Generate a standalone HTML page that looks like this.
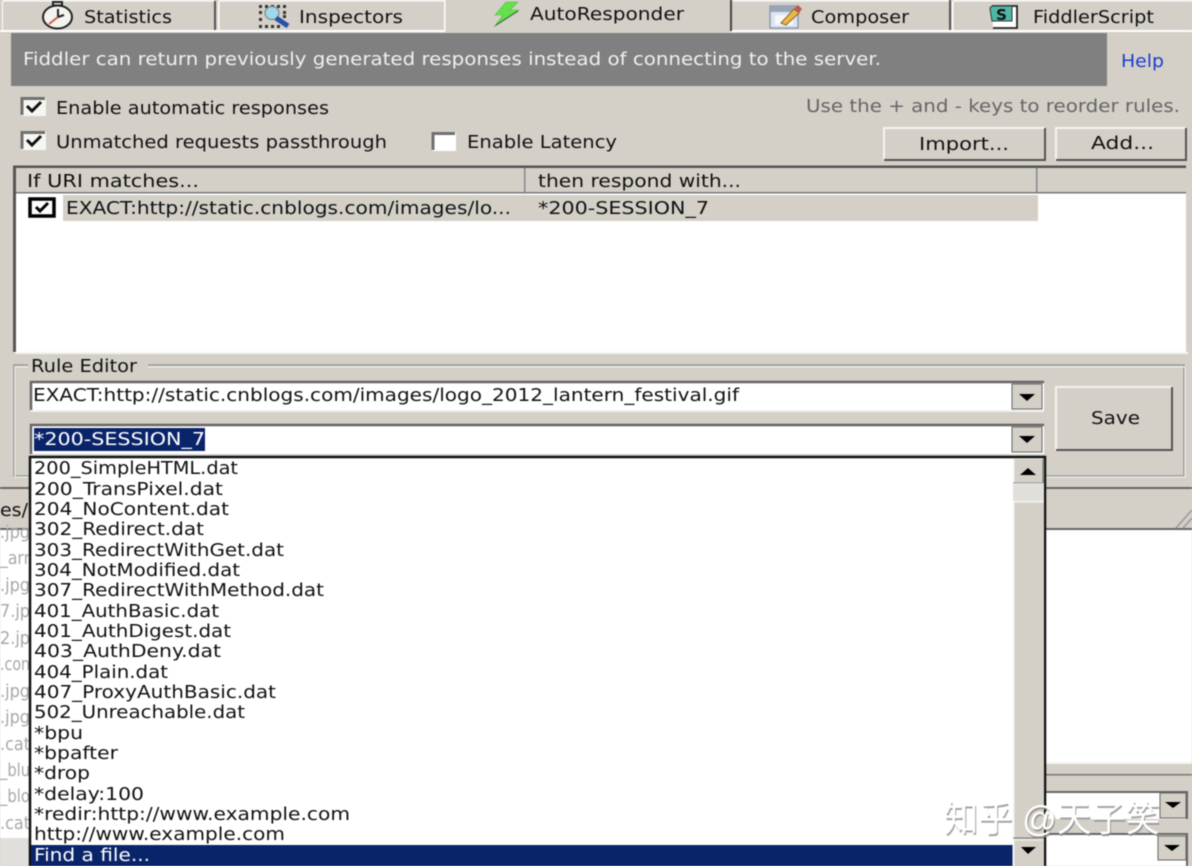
<!DOCTYPE html>
<html><head><meta charset="utf-8"><style>
html,body{margin:0;padding:0;background:#d4d0c8;width:1192px;height:866px;overflow:hidden}
svg{display:block;filter:blur(.5px)}
text{font-family:"DejaVu Sans","Liberation Sans",sans-serif;font-size:18px;fill:#111}
.w{font-family:"Liberation Sans","Noto Sans CJK SC",sans-serif}
</style></head><body>
<svg xmlns="http://www.w3.org/2000/svg" width="1192" height="866" viewBox="0 0 1192 866">
<defs>
<pattern id="h" width="2" height="2" patternUnits="userSpaceOnUse"><rect width="2" height="2" fill="#fff"/><rect width="1" height="1" fill="#c4c0b8"/><rect x="1" y="1" width="1" height="1" fill="#c4c0b8"/></pattern>
</defs>
<rect width="1192" height="866" fill="#d4d0c8"/>

<!-- tabs -->
<rect x="0" y="30" width="445" height="2" fill="#fff"/><rect x="731" y="30" width="461" height="2" fill="#fff"/>
<rect x="2" y="1" width="1" height="29" fill="#fff"/>
<rect x="3" y="0" width="211" height="1.5" fill="#fff"/>
<rect x="214" y="1" width="2" height="29" fill="#555"/>
<rect x="218" y="1" width="1.5" height="29" fill="#fff"/>
<rect x="219" y="0" width="225" height="1.5" fill="#fff"/>
<rect x="444" y="0" width="1.5" height="31" fill="#fff"/>
<rect x="730" y="0" width="2" height="31" fill="#444"/>
<rect x="733" y="0" width="216" height="1.5" fill="#fff"/>
<rect x="949" y="0" width="2" height="30" fill="#555"/>
<rect x="952" y="1" width="1.5" height="29" fill="#fff"/>
<rect x="953" y="0" width="239" height="1.5" fill="#fff"/>
<text x="84" y="23" textLength="88" lengthAdjust="spacingAndGlyphs">Statistics</text>
<text x="299" y="23" textLength="104" lengthAdjust="spacingAndGlyphs">Inspectors</text>
<text x="530" y="20" textLength="154" lengthAdjust="spacingAndGlyphs">AutoResponder</text>
<text x="811" y="23" textLength="98" lengthAdjust="spacingAndGlyphs">Composer</text>
<text x="1033" y="23" textLength="121" lengthAdjust="spacingAndGlyphs">FiddlerScript</text>

<!-- stopwatch -->
<g fill="none" stroke="#222" stroke-width="2"><ellipse cx="57.500" cy="17" rx="14.500" ry="11.500" fill="#f4f4ee"/><rect x="53" y="2" width="9" height="3.500" fill="#ddd"/><path d="M58 17V9M58 17L64 15" stroke="#222"/><path d="M58 17L49 24" stroke="#d05a50"/></g>
<!-- inspectors -->
<g fill="#333"><rect x="259" y="5" width="3" height="3"/><rect x="265" y="5" width="3" height="3"/><rect x="271" y="5" width="3" height="3"/><rect x="277" y="5" width="3" height="3"/><rect x="283" y="5" width="3" height="3"/><rect x="259" y="11" width="3" height="3"/><rect x="283" y="11" width="3" height="3"/><rect x="259" y="18" width="3" height="3"/><rect x="283" y="15" width="3" height="3"/><rect x="259" y="25" width="3" height="3"/><rect x="265" y="25" width="3" height="3"/><rect x="271" y="25" width="3" height="3"/><rect x="277" y="25" width="3" height="3"/></g>
<ellipse cx="272" cy="13" rx="7" ry="6.500" fill="#9fd8e8" stroke="#778"/><path d="M276 18L288 26" stroke="#2a50a8" stroke-width="5"/>
<!-- lightning -->
<path d="M506 2L518 2L510 10L519 10L494 27L503 15L495 15Z" fill="#63e04c" stroke="#50c03c" stroke-width=".6"/><path d="M496 25L518 11" stroke="#4d7a45" stroke-width="1.400"/>
<!-- composer -->
<rect x="770" y="6" width="28" height="22" fill="#dbe5f2" stroke="#8c97a8" stroke-width="1.400"/><rect x="770" y="6" width="28" height="6" fill="#9aa6b8"/><rect x="775" y="15" width="18" height="10" fill="#f8f8f8"/><path d="M781 23L794 9L799 13L786 25Z" fill="#e8b84a" stroke="#8c6a20" stroke-width="1"/><path d="M794 9L799 13L802 9L798 5Z" fill="#c0584a"/>
<!-- script -->
<path d="M992 6H1017V28H993" fill="#fff" stroke="#222" stroke-width="1.800"/><path d="M990 9Q990 6 994 6H1012V21H992Z" fill="#4eb8a8" stroke="#333"/><text x="996" y="20" textLength="11" lengthAdjust="spacingAndGlyphs" style="font-size:15px;font-weight:bold">S</text>

<!-- banner -->
<rect x="11" y="33" width="1096" height="53" fill="#808080"/>
<text x="23" y="65" textLength="858" lengthAdjust="spacingAndGlyphs" style="fill:#f0f0f0">Fiddler can return previously generated responses instead of connecting to the server.</text>
<text x="1121" y="67" textLength="43" lengthAdjust="spacingAndGlyphs" style="fill:#1c3fd0">Help</text>

<!-- checkboxes -->
<g>
<rect x="21" y="97" width="25" height="19" fill="#f6f6f2"/><path d="M22 115V98.500H45" fill="none" stroke="#707070" stroke-width="3"/><path d="M27 106L32 111L41 102" fill="none" stroke="#111" stroke-width="3"/>
<rect x="21" y="131" width="25" height="19" fill="#f6f6f2"/><path d="M22 149V132.500H45" fill="none" stroke="#707070" stroke-width="3"/><path d="M27 140L32 145L41 136" fill="none" stroke="#111" stroke-width="3"/>
<rect x="432" y="132" width="24" height="19" fill="#fff"/><path d="M433 150V133.500H455" fill="none" stroke="#707070" stroke-width="3"/>
</g>
<text x="56" y="114" textLength="273" lengthAdjust="spacingAndGlyphs">Enable automatic responses</text>
<text x="56" y="148" textLength="331" lengthAdjust="spacingAndGlyphs">Unmatched requests passthrough</text>
<text x="467" y="148" textLength="150" lengthAdjust="spacingAndGlyphs">Enable Latency</text>
<text x="806" y="112" textLength="374" lengthAdjust="spacingAndGlyphs" style="fill:#666">Use the + and - keys to reorder rules.</text>

<!-- buttons -->
<g fill="none">
<path d="M884 161V128H1045" stroke="#f4f4f0" stroke-width="2"/><path d="M884 160H1045V128" stroke="#555" stroke-width="2"/>
<path d="M1056 161V128H1186" stroke="#f4f4f0" stroke-width="2"/><path d="M1056 160H1186V128" stroke="#555" stroke-width="2"/>
<path d="M1056 451V387H1172" stroke="#f4f4f0" stroke-width="2"/><path d="M1056 450H1172V387" stroke="#555" stroke-width="2"/>
</g>
<text x="919" y="150" textLength="90" lengthAdjust="spacingAndGlyphs">Import...</text>
<text x="1091" y="149" textLength="63" lengthAdjust="spacingAndGlyphs">Add...</text>
<text x="1091" y="424" textLength="49" lengthAdjust="spacingAndGlyphs">Save</text>

<!-- list -->
<rect x="14" y="167" width="1172" height="186" fill="#fff"/>
<path d="M14.500 352V167H1186" fill="none" stroke="#555" stroke-width="3"/>
<rect x="16" y="168" width="1170" height="24" fill="#d4d0c8"/>
<rect x="16" y="192" width="1170" height="1.500" fill="#777"/>
<rect x="524" y="168" width="1.500" height="24" fill="#888"/><rect x="1036" y="168" width="1.500" height="24" fill="#888"/>
<rect x="16" y="352" width="1172" height="2" fill="#f4f4f0"/>
<text x="27" y="187" textLength="172" lengthAdjust="spacingAndGlyphs">If URI matches...</text>
<text x="538" y="187" textLength="203" lengthAdjust="spacingAndGlyphs">then respond with...</text>
<rect x="63" y="195" width="975" height="26" fill="#d4d0c8"/>
<rect x="30" y="199" width="24" height="17" fill="#fff" stroke="#000" stroke-width="3.500"/>
<path d="M36 207L40 211L48 203" fill="none" stroke="#000" stroke-width="3"/>
<text x="66" y="214" textLength="445" lengthAdjust="spacingAndGlyphs">EXACT:http://static.cnblogs.com/images/lo...</text>
<text x="538" y="214" textLength="171" lengthAdjust="spacingAndGlyphs">*200-SESSION_7</text>

<!-- rule editor -->
<rect x="14" y="365" width="1170" height="111" fill="none" stroke="#999" stroke-width="1.500"/>
<rect x="15" y="367" width="1170" height="110" fill="none" stroke="#f4f4f0" stroke-width="1"/>
<rect x="28" y="358" width="120" height="16" fill="#d4d0c8"/>
<text x="31" y="372" textLength="106" lengthAdjust="spacingAndGlyphs">Rule Editor</text>
<rect x="30" y="381" width="1014" height="30" fill="#fff"/><path d="M31 411V382H1044" fill="none" stroke="#666" stroke-width="2.500"/><rect x="30" y="410" width="1014" height="2" fill="#f0f0ec"/>
<path d="M1012 409V384H1042" fill="none" stroke="#f4f4f0" stroke-width="0"/>
<rect x="1012" y="384" width="30" height="25" fill="#d4d0c8" stroke="#666"/><path d="M1019 394H1035L1027 401Z" fill="#000"/>
<text x="33" y="401" textLength="706" lengthAdjust="spacingAndGlyphs">EXACT:http://static.cnblogs.com/images/logo_2012_lantern_festival.gif</text>
<rect x="30" y="424" width="1014" height="30" fill="#fff"/><path d="M31 454V425H1044" fill="none" stroke="#666" stroke-width="2.500"/>
<rect x="1012" y="427" width="30" height="25" fill="#d4d0c8" stroke="#666"/><path d="M1019 436H1035L1027 443Z" fill="#000"/>
<rect x="34" y="428" width="171" height="23" fill="#0a246a"/>
<text x="34" y="445" textLength="171" lengthAdjust="spacingAndGlyphs" style="fill:#fff">*200-SESSION_7</text>

<!-- lower panel -->
<rect x="0" y="487" width="1192" height="2" fill="#666"/>
<rect x="0" y="528" width="1192" height="2" fill="#666"/>
<rect x="0" y="530" width="1192" height="232" fill="#fff"/>
<path d="M1176 528L1192 510M1183 528L1192 518" stroke="#999" stroke-width="1.500"/>
<text x="0" y="516" textLength="28" lengthAdjust="spacingAndGlyphs">es/</text>
<rect x="0" y="762" width="30" height="76" fill="#fff"/>
<text x="0" y="538" textLength="30" lengthAdjust="spacingAndGlyphs" style="fill:#a8a8a8">.jpg</text>
<text x="0" y="564" textLength="30" lengthAdjust="spacingAndGlyphs" style="fill:#a8a8a8">_arr</text>
<text x="0" y="591" textLength="30" lengthAdjust="spacingAndGlyphs" style="fill:#a8a8a8">.jpg</text>
<text x="0" y="617" textLength="30" lengthAdjust="spacingAndGlyphs" style="fill:#a8a8a8">7.jp</text>
<text x="0" y="644" textLength="30" lengthAdjust="spacingAndGlyphs" style="fill:#a8a8a8">2.jp</text>
<text x="0" y="670" textLength="30" lengthAdjust="spacingAndGlyphs" style="fill:#a8a8a8">.con</text>
<text x="0" y="697" textLength="30" lengthAdjust="spacingAndGlyphs" style="fill:#a8a8a8">.jpg</text>
<text x="0" y="723" textLength="30" lengthAdjust="spacingAndGlyphs" style="fill:#a8a8a8">.jpg</text>
<text x="0" y="750" textLength="30" lengthAdjust="spacingAndGlyphs" style="fill:#a8a8a8">.cat</text>
<text x="0" y="776" textLength="30" lengthAdjust="spacingAndGlyphs" style="fill:#a8a8a8">_blu</text>
<text x="0" y="802" textLength="30" lengthAdjust="spacingAndGlyphs" style="fill:#a8a8a8">_blo</text>
<text x="0" y="829" textLength="30" lengthAdjust="spacingAndGlyphs" style="fill:#a8a8a8">.cat</text>
<rect x="0" y="838" width="30" height="28" fill="url(#h)"/>

<!-- right lower -->
<rect x="1046" y="762" width="146" height="2" fill="#f4f4f0"/>
<rect x="1046" y="774" width="146" height="1.500" fill="#777"/>
<rect x="1046" y="791" width="141" height="28" fill="#fff"/><path d="M1046 792H1187V819" fill="none" stroke="#666" stroke-width="2"/>
<rect x="1160" y="793" width="26" height="25" fill="#d4d0c8" stroke="#666"/><path d="M1165 802H1181L1173 808Z" fill="#000"/>
<rect x="1046" y="833" width="141" height="33" fill="#fff"/><path d="M1046 834H1187V866" fill="none" stroke="#666" stroke-width="2"/>
<rect x="1158" y="836" width="28" height="24" fill="#d4d0c8" stroke="#666"/><path d="M1164 845H1180L1172 851Z" fill="#000"/>

<!-- dropdown -->
<rect x="30" y="457" width="1015" height="409" fill="#fff"/>
<path d="M30 866V457H1045V866" fill="none" stroke="#111" stroke-width="2.500"/>
<rect x="1013" y="459" width="31" height="407" fill="#d4d0c8"/>
<rect x="1013" y="459" width="1.500" height="407" fill="#f4f4f0"/>
<path d="M1013 483H1043V459" fill="none" stroke="#666"/>
<path d="M1020 475H1036L1028 468Z" fill="#000"/>
<rect x="1013" y="483" width="31" height="18" fill="url(#h)"/>
<rect x="1013" y="501" width="31" height="1.500" fill="#f4f4f0"/>
<rect x="31" y="845" width="982" height="21" fill="#0a246a"/>
<path d="M1013 866V840H1043" fill="none" stroke="#f4f4f0"/><path d="M1013 838H1044" stroke="#777"/>
<path d="M1021 847H1036L1028 854Z" fill="#000"/>
<text x="34" y="474" textLength="204" lengthAdjust="spacingAndGlyphs">200_SimpleHTML.dat</text>
<text x="34" y="495" textLength="189" lengthAdjust="spacingAndGlyphs">200_TransPixel.dat</text>
<text x="34" y="515" textLength="195" lengthAdjust="spacingAndGlyphs">204_NoContent.dat</text>
<text x="34" y="535" textLength="170" lengthAdjust="spacingAndGlyphs">302_Redirect.dat</text>
<text x="34" y="556" textLength="250" lengthAdjust="spacingAndGlyphs">303_RedirectWithGet.dat</text>
<text x="34" y="576" textLength="206" lengthAdjust="spacingAndGlyphs">304_NotModified.dat</text>
<text x="34" y="596" textLength="290" lengthAdjust="spacingAndGlyphs">307_RedirectWithMethod.dat</text>
<text x="34" y="617" textLength="185" lengthAdjust="spacingAndGlyphs">401_AuthBasic.dat</text>
<text x="34" y="637" textLength="197" lengthAdjust="spacingAndGlyphs">401_AuthDigest.dat</text>
<text x="34" y="657" textLength="187" lengthAdjust="spacingAndGlyphs">403_AuthDeny.dat</text>
<text x="34" y="678" textLength="134" lengthAdjust="spacingAndGlyphs">404_Plain.dat</text>
<text x="34" y="698" textLength="242" lengthAdjust="spacingAndGlyphs">407_ProxyAuthBasic.dat</text>
<text x="34" y="718" textLength="211" lengthAdjust="spacingAndGlyphs">502_Unreachable.dat</text>
<text x="34" y="739" textLength="49" lengthAdjust="spacingAndGlyphs">*bpu</text>
<text x="34" y="759" textLength="84" lengthAdjust="spacingAndGlyphs">*bpafter</text>
<text x="34" y="779" textLength="56" lengthAdjust="spacingAndGlyphs">*drop</text>
<text x="34" y="800" textLength="110" lengthAdjust="spacingAndGlyphs">*delay:100</text>
<text x="34" y="820" textLength="316" lengthAdjust="spacingAndGlyphs">*redir:http://www.example.com</text>
<text x="34" y="840" textLength="251" lengthAdjust="spacingAndGlyphs">http://www.example.com</text>
<text x="34" y="861" textLength="116" lengthAdjust="spacingAndGlyphs" style="fill:#fff">Find a file...</text>

<!-- watermark -->
<text class="w" x="944" y="832" textLength="216" lengthAdjust="spacingAndGlyphs" style="font-size:36px;fill:#888;opacity:.75" dx="1" dy="1">知乎 @天子笑</text>
<text class="w" x="944" y="831" textLength="216" lengthAdjust="spacingAndGlyphs" style="font-size:36px;fill:#fff">知乎 @天子笑</text>
</svg>
</body></html>
